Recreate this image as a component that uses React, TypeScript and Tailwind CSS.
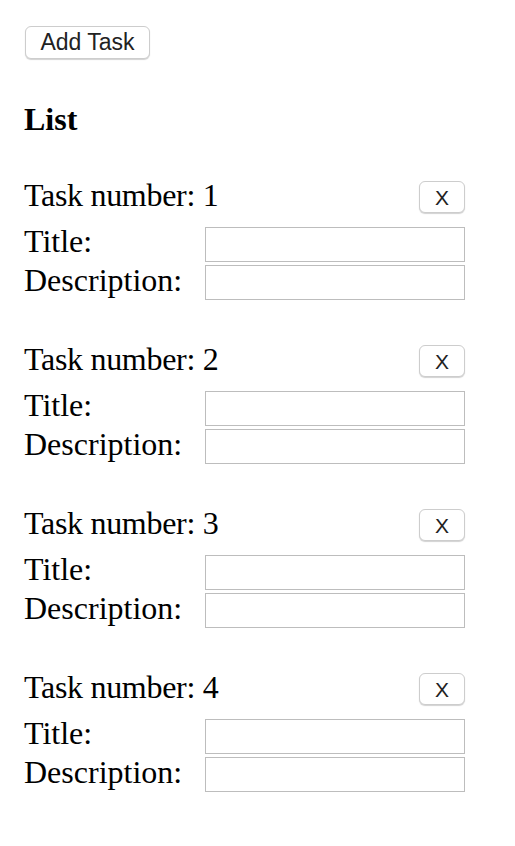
import React from "react";

const serif = { fontFamily: '"Liberation Serif", "Times New Roman", serif' };
const sans = { fontFamily: '"Liberation Sans", Arial, sans-serif' };

function Task({ n }: { n: number }) {
  return (
    <div className="w-[441px] mb-[45px]">
      <div className="flex h-[37px] items-start justify-between">
        <span className="text-[32px] leading-[37px] tracking-[-0.3px] text-black">Task number: {n}</span>
        <button
          style={sans}
          className="mt-[4px] flex h-[32px] w-[46px] items-center justify-center rounded-[6px] border border-[#cdcdcd] bg-white text-[21px] leading-none text-[#222] shadow-[0_1px_1px_rgba(0,0,0,0.18)]"
        >
          X
        </button>
      </div>
      <div className="mt-[4px] flex h-[39px] items-start">
        <span className="mt-[5px] w-[181px] text-[32px] leading-[37px] text-black">Title:</span>
        <input className="mt-[9px] h-[35px] w-[260px] border border-[#bdbdbd] bg-white outline-none" />
      </div>
      <div className="flex h-[39px] items-start">
        <span className="mt-[5px] w-[181px] text-[32px] leading-[37px] text-black">Description:</span>
        <input className="mt-[8px] h-[35px] w-[260px] border border-[#bdbdbd] bg-white outline-none" />
      </div>
    </div>
  );
}

export default function App() {
  return (
    <div style={serif} className="min-h-[846px] w-[515px] bg-white pl-[24px] pt-[26px]">
      <button
        style={sans}
        className="ml-[1px] flex h-[33px] w-[125px] items-center justify-center rounded-[6px] border border-[#cdcdcd] bg-white text-[23px] leading-none text-[#222] shadow-[0_1px_1px_rgba(0,0,0,0.18)]"
      >
        Add Task
      </button>
      <div className="mt-[42px] text-[32px] font-bold leading-[37px] text-black">List</div>
      <div className="mt-[39px]">
        {[1, 2, 3, 4].map((n) => (
          <Task key={n} n={n} />
        ))}
      </div>
    </div>
  );
}
